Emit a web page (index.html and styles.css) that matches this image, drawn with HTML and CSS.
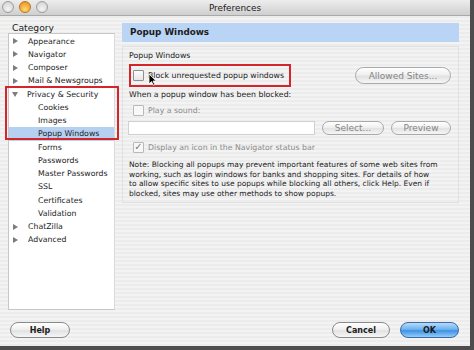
FILE: index.html
```html
<!DOCTYPE html>
<html lang="en">
<head>
    <meta charset="UTF-8">
    <title>Preferences</title>
    <link rel="stylesheet" href="styles.css">
</head>
<body>

    <div class="window">
        <div class="titlebar">
            <div class="lights">
                <span class="light"></span>
                <span class="light light-min"></span>
                <span class="light"></span>
            </div>
            <div class="title">Preferences</div>
        </div>

        <div class="main">
            <!-- lista de categorias -->
            <div class="sidebar">
                <div class="category-label">Category</div>
                <div class="tree">
                    <div class="row"><span class="twisty"></span>Appearance</div>
                    <div class="row"><span class="twisty"></span>Navigator</div>
                    <div class="row"><span class="twisty"></span>Composer</div>
                    <div class="row"><span class="twisty"></span>Mail &amp; Newsgroups</div>
                    <div class="row"><span class="twisty open"></span>Privacy &amp; Security</div>
                    <div class="row child">Cookies</div>
                    <div class="row child">Images</div>
                    <div class="row child selected">Popup Windows</div>
                    <div class="row child">Forms</div>
                    <div class="row child">Passwords</div>
                    <div class="row child">Master Passwords</div>
                    <div class="row child">SSL</div>
                    <div class="row child">Certificates</div>
                    <div class="row child">Validation</div>
                    <div class="row"><span class="twisty"></span>ChatZilla</div>
                    <div class="row"><span class="twisty"></span>Advanced</div>
                </div>
            </div>

            <!-- painel da direita -->
            <div class="content">
                <div class="panel-header">Popup Windows</div>
                <div class="groupbox">
                    <div class="group-label">Popup Windows</div>

                    <div class="block-row">
                        <label class="check-item">
                            <span class="checkbox"></span>
                            Block unrequested popup windows
                        </label>
                        <button class="pill disabled allowed">Allowed Sites...</button>
                    </div>

                    <div class="when-label">When a popup window has been blocked:</div>

                    <label class="check-item muted sound">
                        <span class="checkbox off"></span>
                        Play a sound:
                    </label>

                    <div class="sound-row">
                        <div class="textfield"></div>
                        <button class="pill disabled select">Select...</button>
                        <button class="pill disabled preview">Preview</button>
                    </div>

                    <label class="check-item muted icon-row">
                        <span class="checkbox off checked">&#10003;</span>
                        Display an icon in the Navigator status bar
                    </label>

                    <p class="note">Note: Blocking all popups may prevent important features of some web sites from<br>working, such as login windows for banks and shopping sites. For details of how<br>to allow specific sites to use popups while blocking all others, click Help. Even if<br>blocked, sites may use other methods to show popups.</p>
                </div>
            </div>
        </div>

        <div class="footer">
            <button class="pill big help">Help</button>
            <div class="footer-right">
                <button class="pill big cancel">Cancel</button>
                <button class="pill big ok">OK</button>
            </div>
        </div>

        <!-- marcacoes vermelhas por cima -->
        <div class="mark mark-tree"></div>
        <div class="mark mark-check"></div>
        <svg class="cursor" width="9" height="13" viewBox="0 0 9 13">
            <path d="M1 1 L1 11 L3.5 8.6 L5.3 12.3 L6.8 11.6 L5 8 L8.2 8 Z" fill="#000" stroke="#fff" stroke-width="0.8"/>
        </svg>
    </div>

</body>
</html>
```

FILE: styles.css
```css
/* janela de preferencias */

:root {
    --texto: #1c1c1c;
    --cinza: #8b8b8b;
    --vermelho: #d4252b;
    --azul-sel: #b6d0f2;
}

body {
    margin: 0;
    background: #4d4d4d;
    font-family: 'DejaVu Sans', sans-serif;
    font-size: 7.8px;
    color: var(--texto);
    overflow: hidden;
}

.window {
    position: relative;
    width: 470px; height: 346px;
    display: flex; flex-direction: column;
    background: repeating-linear-gradient(#ececec 0 2px, #f3f3f3 2px 4px);
}

/* --- barra de titulo --- */
.titlebar {
    height: 15px; position: relative;
    background: linear-gradient(#ededed, #cfcfcf);
    border-bottom: 1px solid #a9a9a9;
    display: flex; align-items: center; justify-content: center;
}
.lights {
    position: absolute; left: 2px; top: 1px;
    display: flex; gap: 5px;
}
.light {
    width: 12px; height: 12px; border-radius: 50%; box-sizing: border-box;
    background: radial-gradient(circle at 50% 70%, #f4f4f4, #cdcdcd);
    border: 1px solid #9c9c9c;
}
.light-min {
    background: radial-gradient(circle at 50% 75%, #ffd86a, #e98a1a);
    border-color: #b8731c;
}
.title { font-size: 8.9px; color: #222; }

/* --- area principal --- */
.main {
    display: flex; gap: 7px;
    padding: 6px 11px 0 8px;
    height: 294px; box-sizing: border-box;
}

.sidebar { width: 107px; display: flex; flex-direction: column; }
.category-label {
    font-size: 9.2px; line-height: 11px; padding-left: 4px;
}
.tree {
    flex: 1; background: #fff;
    border: 1px solid #c6c6c6; border-right-color: #dadada;
    padding-top: 0.5px;
}
.row {
    height: 13.25px; line-height: 13.25px;
    display: flex; align-items: center;
    padding-left: 4px; white-space: nowrap;
}
.row.child { padding-left: 29px; }
.row.selected { background: var(--azul-sel); }
.twisty {
    width: 0; height: 0; margin-right: 10px;
    border-top: 3.5px solid transparent; border-bottom: 3.5px solid transparent;
    border-left: 5px solid #7d7d7d;
}
.twisty.open {
    border-left: 3.5px solid transparent; border-right: 3.5px solid transparent;
    border-top: 5px solid #7d7d7d; border-bottom: 0;
    margin-right: 9px; margin-left: -1px;
}

.content { flex: 1; padding-top: 1px; }
.panel-header {
    height: 19px; line-height: 19px;
    background: #b9d4f5; font-weight: bold; font-size: 8.8px;
    padding-left: 8px;
}
.groupbox {
    margin-top: 4px;
    border: 1px solid #e0e0e0;
    padding: 4px 7px 4px 6px;
}
.group-label { line-height: 10px; }

.check-item { display: flex; align-items: center; gap: 4px; white-space: nowrap; }
.checkbox {
    width: 11px; height: 11px; box-sizing: border-box;
    border: 1px solid #8f8f8f; border-radius: 1px;
    background: linear-gradient(#fdfdfd, #e6e6e6);
    display: flex; align-items: center; justify-content: center;
    font-size: 10px; line-height: 1; color: #7d7d7d;
}
.checkbox.off { border-color: #b9b9b9; background: #f8f8f8; }
.muted { color: var(--cinza); }

.block-row {
    display: flex; justify-content: space-between; align-items: center;
    height: 17px; margin-top: 6px; padding-left: 4px;
}
.when-label { line-height: 10px; margin-top: 6px; }
.sound { height: 12px; margin-top: 4px; padding-left: 4px; }
.sound-row {
    display: flex; gap: 7px; margin-top: 5px; margin-left: -1px;
    height: 14px;
}
.textfield {
    width: 187px; background: #fff;
    border: 1px solid #d0d0d0; box-sizing: border-box;
}
.icon-row { height: 12px; margin-top: 6px; padding-left: 4px; }

.note {
    margin: 7px 0 0 0; line-height: 9.5px; white-space: nowrap;
    font-size: 7.5px;
}

/* --- botoes --- */
.pill {
    font-family: 'DejaVu Sans', sans-serif; font-size: 8px;
    border: 1px solid #8a8a8a; border-radius: 9px;
    background: linear-gradient(#ffffff, #f0f0f0 45%, #e2e2e2 55%, #f6f6f6);
    color: var(--texto); padding: 0; height: 14px;
}
.pill.disabled { color: #858585; border-color: #a9a9a9; }
.allowed { width: 96px; height: 17px; font-size: 9px; }
.select { width: 62px; font-size: 9px; }
.preview { width: 60px; font-size: 9px; }

.footer {
    flex: 1; display: flex; justify-content: space-between;
    padding: 12px 11px 0 10px;
}
.footer-right { display: flex; gap: 10px; }
.pill.big { height: 16px; font-weight: bold; font-size: 8px; }
.help { width: 60px; }
.cancel { width: 58px; }
.ok {
    width: 59px; border-color: #3c6aa6;
    background: linear-gradient(#b6dbfb, #6fb3ef 45%, #3f92e4 55%, #93cdf9);
}

/* --- marcacoes vermelhas e cursor --- */
.mark { position: absolute; border: 2px solid var(--vermelho); box-sizing: border-box; }
.mark-tree { left: 5px; top: 86px; width: 114px; height: 54px; }
.mark-check { left: 129px; top: 64px; width: 162px; height: 23px; }
.cursor { position: absolute; left: 148px; top: 73px; }
```
